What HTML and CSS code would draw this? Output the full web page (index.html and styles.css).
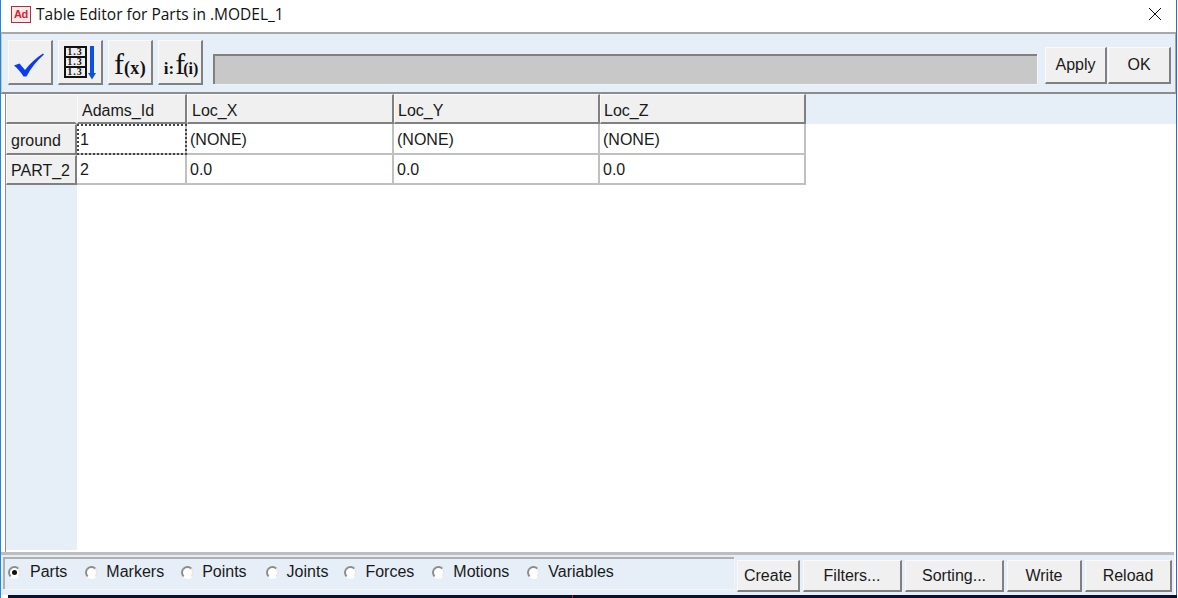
FILE: index.html
```html
<!DOCTYPE html>
<html lang="en">
<head>
<meta charset="utf-8">
<title>Table Editor for Parts in .MODEL_1</title>
<link rel="stylesheet" href="styles.css">
</head>
<body>
<div class="window">
  <header class="titlebar">
    <div class="app-icon">Ad</div>
    <div class="title">Table Editor for Parts in .MODEL_1</div>
    <svg class="close" width="14" height="14" viewBox="0 0 14 14"><path d="M1 1L13 13M13 1L1 13" stroke="#111" stroke-width="1" fill="none"/></svg>
  </header>
  <div class="toolbar">
    <button class="btn tool check">
      <svg width="30" height="24" viewBox="0 0 30 24"><path d="M0 12.5L5.5 10.5L11 17C16 10.500 22 5 29 .5L30 1.500C23 7.500 17 15 12.500 23.500L9.500 23.500C7 19.500 4 15.500 0 12.500Z" fill="#0a3cf0"/></svg>
    </button>
    <button class="btn tool sheet-icon">
      <span class="cells"><span class="cell">1.3</span><span class="cell">1.3</span><span class="cell">1.3</span></span>
      <svg class="arrow" width="8" height="34" viewBox="0 0 8 34"><path d="M2 0H6V27H8L4 33.500L0 27H2Z" fill="#0a50e8"/></svg>
    </button>
    <button class="btn tool formula"><span class="big">f</span><span class="small">(x)</span></button>
    <button class="btn tool formula"><span class="mid">i:</span><span class="big">f</span><span class="small narrow">(i)</span></button>
    <div class="field"></div>
    <button class="btn action apply">Apply</button>
    <button class="btn action ok">OK</button>
  </div>
  <main class="content">
    <div class="sheet">
      <div class="row head">
        <div class="hcell corner"></div>
        <div class="hcell c-id">Adams_Id</div>
        <div class="hcell c-wide">Loc_X</div>
        <div class="hcell c-loc">Loc_Y</div>
        <div class="hcell c-loc">Loc_Z</div>
      </div>
      <div class="row first">
        <div class="rowhead">ground</div>
        <div class="cell-d c-id focus">1</div>
        <div class="cell-d c-wide">(NONE)</div>
        <div class="cell-d c-loc">(NONE)</div>
        <div class="cell-d c-loc">(NONE)</div>
      </div>
      <div class="row second">
        <div class="rowhead">PART_2</div>
        <div class="cell-d c-id">2</div>
        <div class="cell-d c-wide">0.0</div>
        <div class="cell-d c-loc">0.0</div>
        <div class="cell-d c-loc">0.0</div>
      </div>
      <div class="rest"></div>
    </div>
  </main>
  <footer class="bottom">
    <div class="radios">
      <label class="radio r1"><span class="dot on"></span>Parts</label>
      <label class="radio r2"><span class="dot"></span>Markers</label>
      <label class="radio r3"><span class="dot"></span>Points</label>
      <label class="radio r4"><span class="dot"></span>Joints</label>
      <label class="radio r5"><span class="dot"></span>Forces</label>
      <label class="radio r6"><span class="dot"></span>Motions</label>
      <label class="radio"><span class="dot"></span>Variables</label>
    </div>
    <div class="actions">
      <button class="btn foot b-create">Create</button>
      <button class="btn foot b-filters">Filters...</button>
      <button class="btn foot b-sorting">Sorting...</button>
      <button class="btn foot b-write">Write</button>
      <button class="btn foot b-reload">Reload</button>
    </div>
  </footer>
  <div class="edge"></div>
</div>
</body>
</html>
```
FILE: styles.css
```css
* { box-sizing: border-box; }
html, body { margin: 0; padding: 0; background: #fff; }
body { width: 1178px; height: 598px; overflow: hidden; font-family: "Liberation Sans", Arial, sans-serif; font-size: 16px; color: #1a1a1a; }
.window { width: 1178px; height: 598px; display: flex; flex-direction: column; border-left: 1px solid #1e88e5; border-right: 1px solid #fff; position: relative; }
.window::after { content: ""; position: absolute; top: 0; bottom: 3px; right: 0; width: 1px; background: #1e6fd0; }
.titlebar { height: 32px; flex: none; display: flex; align-items: center; padding: 0 0 4px 10px; background: #fff; }
.app-icon { width: 20px; height: 17px; border: 1px solid #b03040; color: #d8202f; background: #fbeaea; font-size: 11px; font-weight: bold; line-height: 15px; text-align: center; letter-spacing: -0.3px; }
.title { margin-left: 5px; font-family: "Open Sans", sans-serif; font-size: 15.5px; color: #111; flex: 1; }
.close { margin-right: 15px; }
.toolbar { height: 62px; flex: none; margin-right: 1px; padding: 6px 4px 0 6px; display: flex; align-items: flex-start; background: #e6eef8; border-top: 2px solid #a8a8a8; border-left: 1px solid #c8c8c8; border-right: 1px solid #a8a8a8; border-bottom: 2px solid #8c8c8c; }
.btn { margin: 0; padding: 0; font: inherit; color: #1a1a1a; background: #f0f0f0; border-style: solid; border-width: 1px 2px 2px 1px; border-color: #fafafa #808080 #808080 #fafafa; display: flex; align-items: center; justify-content: center; }
.tool { width: 45px; height: 45px; margin-right: 5px; }
.check { padding: 5px 2px 0 0; }
.sheet-icon { padding-right: 1px; }
.cells { display: flex; flex-direction: column; width: 23px; height: 32px; background: #111; gap: 2px; padding: 2px; margin-right: 1px; }
.cell { flex: 1; background: #eee; font-family: "Liberation Serif", serif; font-weight: bold; font-size: 10px; line-height: 8px; text-align: center; color: #111; letter-spacing: 1px; }
.arrow { margin-top: 2px; }
.formula { font-family: "Liberation Serif", serif; color: #111; font-weight: bold; align-items: baseline; padding-top: 7px; }
.big { font-size: 30px; line-height: 32px; font-weight: normal; }
.small { font-size: 18px; margin-left: 0; letter-spacing: .4px; }
.small.narrow { font-size: 16px; margin-left: -2px; letter-spacing: 0; }
.mid { font-size: 17px; margin: 0 1px 0 2px; }
.field { width: 824px; height: 30px; margin: 14px 8px 0 5px; background: #c8c8c8; border-style: solid; border-width: 2px 0 0 2px; border-color: #808080; box-shadow: 1px 1px 0 #f4f4f4; }
.action { height: 37px; margin-top: 7px; }
.apply { width: 62px; margin-right: 1px; }
.ok { width: 63px; }
.content { flex: none; height: 458px; background: #fff; padding-left: 4px; }
.sheet { width: 802px; height: 458px; display: flex; flex-direction: column; position: relative; border-left: 1px solid #8c8c8c; }
.sheet::before { content: ""; position: absolute; z-index: 0; left: 0; top: 30px; bottom: 2px; width: 71px; background: #e6eef8; }
.sheet::after { content: ""; position: absolute; z-index: 0; left: 0; top: 0; height: 30px; width: 1170px; background: #e6eef8; }
.row { display: flex; height: 30px; flex: none; position: relative; z-index: 1; }
.row.first { height: 31px; }
.hcell { background: #f0f0f0; border-style: solid; border-width: 1px 2px 2px 1px; border-color: #fafafa #808080 #808080 #fafafa; padding: 7px 0 0 4px; height: 30px; color: #1a1a1a; }
.hcell.c-loc { padding-left: 3px; }
.corner { width: 71px; border-right-color: #f0f0f0; }
.c-id { width: 110px; }
.c-wide { width: 207px; }
.c-loc { width: 206px; }
.rowhead { width: 71px; height: 100%; background: #f0f0f0; border-style: solid; border-width: 1px 2px 2px 1px; border-color: #fafafa #808080 #808080 #fafafa; padding: 7px 0 0 4px; white-space: nowrap; }
.second .rowhead { padding-top: 6px; }
.cell-d { height: 100%; background: #fff; border-right: 2px solid #c0c0c0; border-bottom: 2px solid #c0c0c0; padding: 6px 0 0 3px; }
.first .cell-d { padding-top: 7px; }
.focus { outline: 2px dotted #444; outline-offset: -2px; }
.rest { flex: 1; }
.bottom { flex: none; height: 43px; margin-right: 3px; border-top: 3px solid #bdbdbd; background: #e6eef8; display: flex; }
.radios { width: 731px; height: 32px; margin: 2px 0 0 2px; padding: 0 0 4px 3px; display: flex; align-items: center; border-style: solid; border-width: 2px 0 0 2px; border-color: #b0b0b0; box-shadow: 1px 1px 0 #f4f4f4; }
.radio { display: flex; align-items: center; }
.r1 { margin-right: 18px; }
.r2 { margin-right: 17px; }
.r3 { margin-right: 19px; }
.r4 { margin-right: 16px; }
.r5 { margin-right: 18px; }
.r6 { margin-right: 18px; }
.dot { width: 13px; height: 13px; margin-right: 8px; border-radius: 50%; background: #fff; border: 2px solid; border-color: #8c8c8c #e8e8e8 #fff #8c8c8c; position: relative; }
.dot.on { margin-right: 9px; }
.dot.on::after { content: ""; position: absolute; left: 2px; top: 2px; width: 5px; height: 5px; border-radius: 50%; background: #111; }
.actions { display: flex; gap: 3px; margin: 5px 0 0 3px; }
.foot { height: 32px; }
.b-create { width: 63px; }
.b-filters { width: 99px; }
.b-sorting { width: 99px; }
.b-write { width: 75px; }
.b-reload { width: 87px; }
.edge { flex: none; height: 3px; margin-left: 7px; background: #0b1030; position: relative; }
.edge::after { content: ""; position: absolute; left: 564px; top: 0; width: 1px; height: 3px; background: #c01030; }
```
